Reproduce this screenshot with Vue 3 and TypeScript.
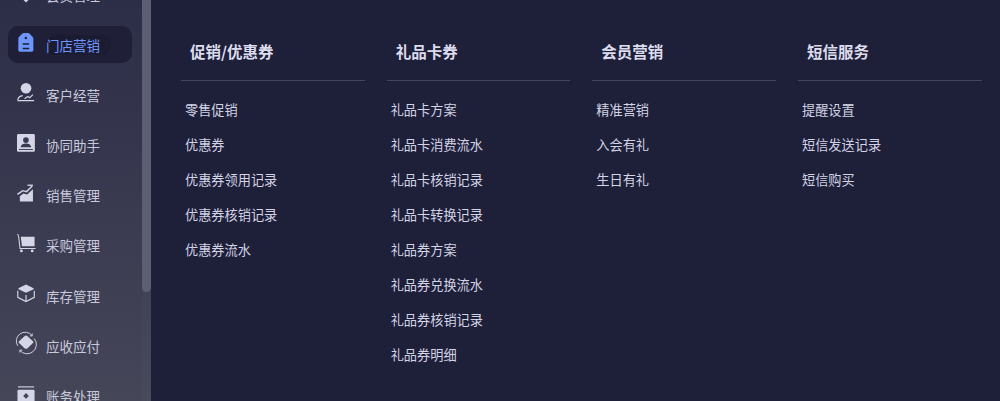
<script setup lang="ts">
interface Col { title: string; items: string[] }
const menu: { name: string; icon: string }[] = [
  { name: '会员管理', icon: 'member' },
  { name: '门店营销', icon: 'tag' },
  { name: '客户经营', icon: 'user' },
  { name: '协同助手', icon: 'card' },
  { name: '销售管理', icon: 'sale' },
  { name: '采购管理', icon: 'cart' },
  { name: '库存管理', icon: 'box' },
  { name: '应收应付', icon: 'pay' },
  { name: '账务处理', icon: 'book' },
]
const cols: Col[] = [
  { title: '促销/优惠券', items: ['零售促销', '优惠券', '优惠券领用记录', '优惠券核销记录', '优惠券流水'] },
  { title: '礼品卡券', items: ['礼品卡方案', '礼品卡消费流水', '礼品卡核销记录', '礼品卡转换记录', '礼品券方案', '礼品券兑换流水', '礼品券核销记录', '礼品券明细'] },
  { title: '会员营销', items: ['精准营销', '入会有礼', '生日有礼'] },
  { title: '短信服务', items: ['提醒设置', '短信发送记录', '短信购买'] },
]
</script>

<template>
  <div class="page">
    <aside class="side">
      <ul class="nav">
        <li v-for="m in menu" :key="m.name" class="nav-item" :class="{ active: m.icon === 'tag' }">
          <svg class="ico" viewBox="0 0 20 20" fill="none">
            <template v-if="m.icon === 'member'">
              <path d="M6.500 17.500h6l-3 3z" fill="currentColor" />
            </template>
            <template v-else-if="m.icon === 'tag'">
              <path d="M1.400 5.800c0-.8.3-1.300.9-1.800L5.500.7C6 .2 6.500 0 7.200 0h4.400c.7 0 1.200.2 1.700.7L16.300 4c.6.5.9 1 .9 1.800V18c0 1-.7 1.700-1.700 1.700H3.100C2.100 19.700 1.400 19 1.400 18z" fill="currentColor" />
              <circle cx="9.300" cy="5.300" r="1.300" fill="#1d1d33" />
              <path d="M6 11.500h6.800M6 16.300h6.800" stroke="#1d1d33" stroke-width="1.500" />
            </template>
            <template v-else-if="m.icon === 'user'">
              <circle cx="9.500" cy="5.500" r="5.600" fill="currentColor" />
              <path d="M.8 18c.3-2.700 1.800-4.200 5.200-4.700M.5 18.500h17.500M8 16.500l3.300-2.300 2 1.300 3.500-3.300" stroke="currentColor" stroke-width="1.200" />
            </template>
            <template v-else-if="m.icon === 'card'">
              <rect x="0" y="0" width="18.800" height="18.800" rx="1.500" fill="currentColor" />
              <circle cx="9.400" cy="6.400" r="3" fill="#3a3a52" />
              <path d="M3.800 14c.5-3 2.700-3.900 5.600-3.900s5.100.9 5.600 3.900z" fill="#3a3a52" />
              <path d="M2 16.300h14.800" stroke="#3a3a52" stroke-width="1" />
            </template>
            <template v-else-if="m.icon === 'sale'">
              <path d="M.5 11 6 7l4 1 6-6" stroke="currentColor" stroke-width="1.500" />
              <path d="M11 1.300h5.800" stroke="currentColor" stroke-width="1.400" />
              <path d="M3 18.500V13l3.800-3 3.800 1L16.800 5.500v13z" fill="currentColor" />
            </template>
            <template v-else-if="m.icon === 'cart'">
              <path d="M.6 0 1.700 2.500l1.500 12.700H19.500" stroke="currentColor" stroke-width="1.100" />
              <path d="M4 3h14.500v10H5.200z" fill="currentColor" />
              <circle cx="4.600" cy="17.800" r="1.500" fill="currentColor" />
              <circle cx="16" cy="17.800" r="1.500" fill="currentColor" />
            </template>
            <template v-else-if="m.icon === 'box'">
              <path d="M9.500 .5 17.500 4.500v1L9.500 9.300 1.500 5.500v-1z" fill="currentColor" />
              <path d="M.8 7v7l8.700 4.500 8.700-4.500V7M9.500 11.500v7" stroke="currentColor" stroke-width="1.200" />
            </template>
            <template v-else-if="m.icon === 'pay'">
              <path d="M8.200 2 9.500 1.600l1.300.4 6 5.500c.7.7.7 1.400 0 2.100l-6 5.600c-.8.6-1.800.6-2.600 0l-6-5.600c-.7-.7-.7-1.400 0-2.100z" fill="currentColor" />
              <path d="M.8 12.500A9.300 9.300 0 0 1 16 1.800M18.200 4.800A9.300 9.300 0 0 1 3 17.200M16 -.5v2.500h-2.500M3 19.500V17h2.500" stroke="currentColor" stroke-width="1" />
            </template>
            <template v-else>
              <path d="M1 2h17" stroke="currentColor" stroke-width="1.200" />
              <rect x=".5" y="5" width="18" height="15" rx="1.500" fill="currentColor" />
              <path d="M9.500 8.500l3 3-3 3-3-3z" fill="#44445a" />
            </template>
          </svg>
          <span class="label">{{ m.name }}</span>
        </li>
      </ul>
      <div class="track"><div class="thumb"></div></div>
    </aside>
    <main class="panel">
      <section v-for="c in cols" :key="c.title" class="col">
        <h3 class="title">{{ c.title }}</h3>
        <a v-for="i in c.items" :key="i" class="link">{{ i }}</a>
      </section>
    </main>
  </div>
</template>

<style>
html, body { margin: 0; background: #1e1f38; }
</style>

<style scoped>
.page {
  display: flex;
  width: 1000px;
  height: 401px;
  overflow: hidden;
  background: #1e1f38;
  font-family: "Noto Sans CJK SC", "Liberation Sans", sans-serif;
}
.side {
  display: flex;
  flex: none;
  width: 151px;
  height: 401px;
  overflow: hidden;
  background: linear-gradient(180deg, #2c2d47 0%, #464659 100%);
}
.nav {
  flex: none;
  width: 142px;
  margin: -24px 0 0;
  padding: 0;
  list-style: none;
}
.nav-item {
  display: flex;
  align-items: center;
  box-sizing: border-box;
  width: 124px;
  height: 37px;
  margin: 0 0 13.200px 8px;
  padding-left: 9px;
  border-radius: 10px;
  color: #d5d5e8;
}
.nav-item.active {
  background: #1f1f37;
  color: #6f96ff;
}
.ico {
  flex: none;
  width: 19px;
  height: 19px;
  margin-top: -4px;
  overflow: visible;
}
.label {
  margin-left: 10px;
  font-size: 13.500px;
  line-height: 20px;
  color: #c9c9dc;
}
.active .label {
  color: #6f96ff;
  background: #1b1b31;
  border-radius: 9px;
  padding-right: 11px;
}
.track {
  flex: none;
  width: 9px;
  background: rgba(255, 255, 255, 0.02);
}
.thumb {
  height: 292px;
  border-radius: 0 0 5px 5px;
  background: #5e5e72;
}
.panel {
  display: flex;
  flex: 1;
  gap: 22px;
  padding: 0 18px 0 30px;
}
.col {
  display: flex;
  flex-direction: column;
  width: 183.670px;
}
.title {
  box-sizing: border-box;
  height: 58px;
  margin: 23px 0 10.500px;
  padding: 18px 0 0 9px;
  border-bottom: 1px solid #45455a;
  font-size: 15.500px;
  line-height: 20px;
  font-weight: 700;
  color: #dcdcee;
}
.link {
  height: 35px;
  padding-left: 4px;
  font-size: 13.200px;
  line-height: 35px;
  color: #d3d3e6;
}
</style>
